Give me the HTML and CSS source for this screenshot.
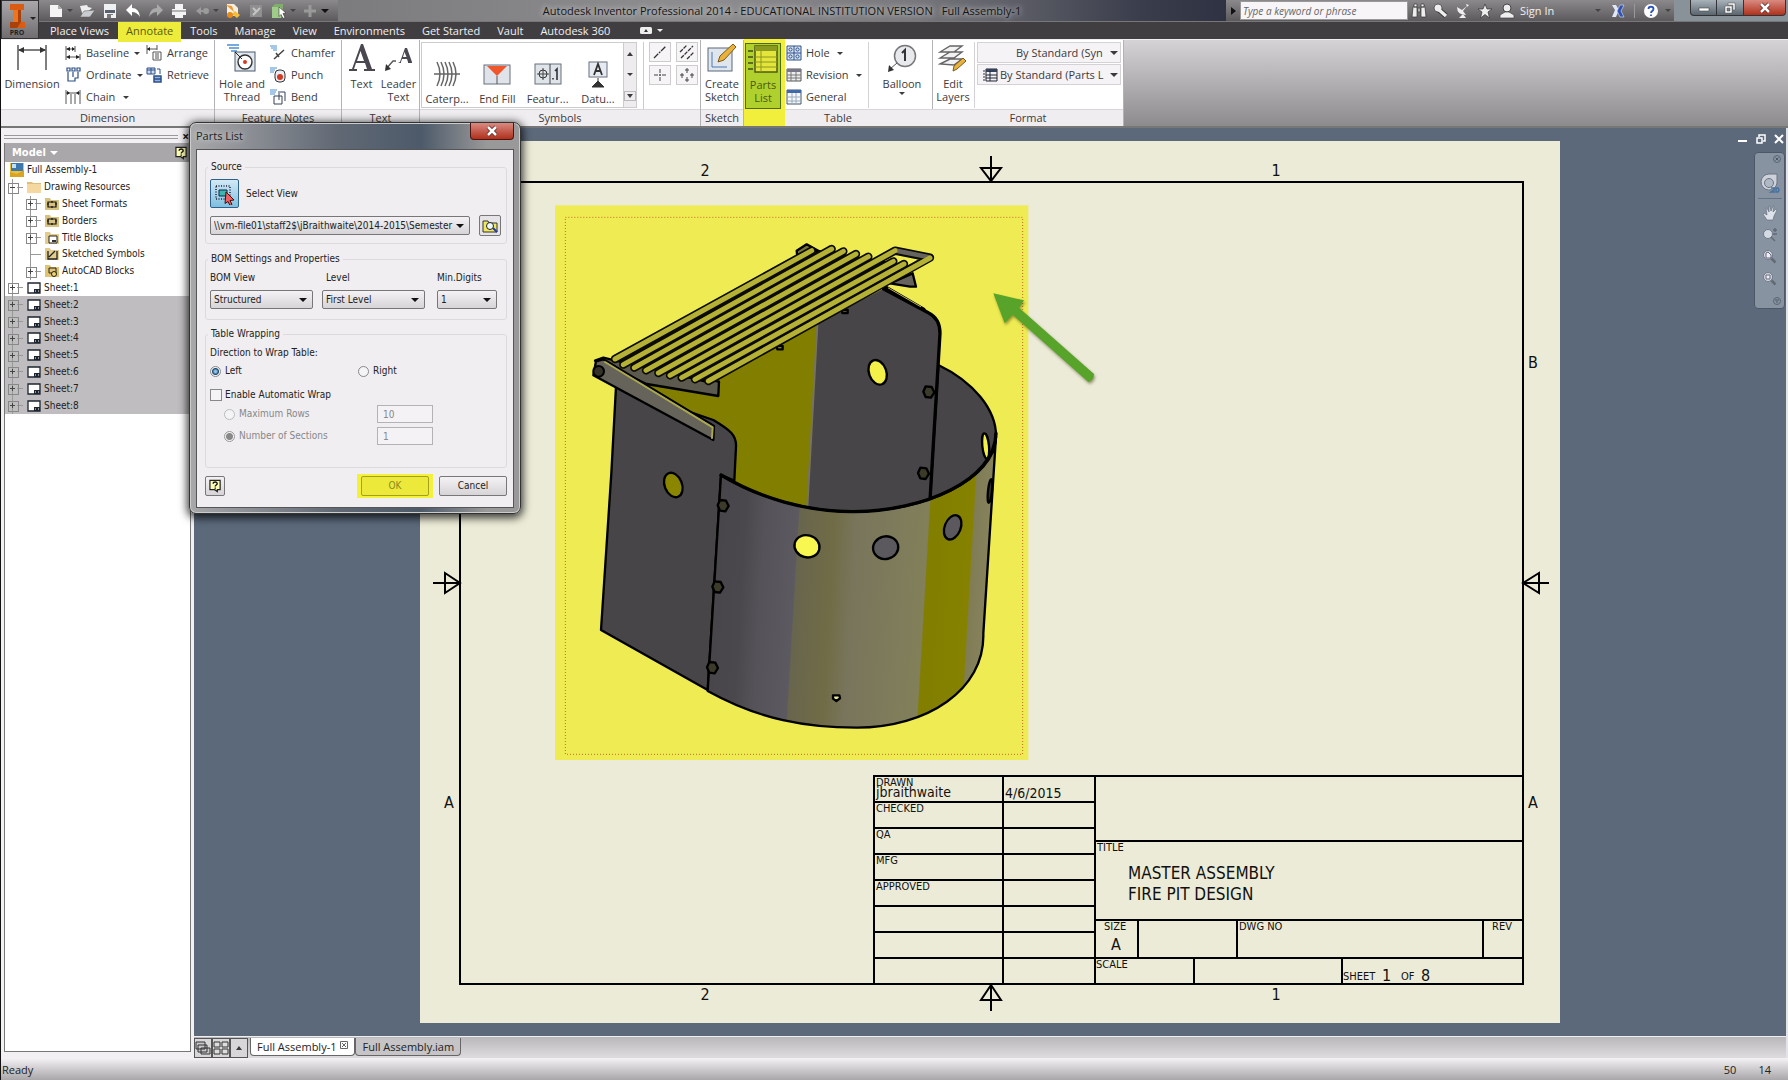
FILE: index.html
```html
<!DOCTYPE html>
<html lang="en">
<head>
<meta charset="utf-8">
<title>Autodesk Inventor Professional 2014 - Full Assembly-1</title>
<link rel="stylesheet" href="styles.css">
</head>
<body>
<svg class="defs" width="0" height="0" aria-hidden="true">
  <symbol id="i-folder" viewBox="0 0 14 14"><path d="M0 2h5l1 1h8v10H0z" fill="#dcbf7c"/><path d="M0 4h14v9H0z" fill="#f4d8a0"/></symbol>
  <symbol id="i-folder-fmt" viewBox="0 0 14 14"><path d="M0 1h5l1 2h8v10H0z" fill="#d8c280"/><path d="M3 5h8v5H3zM2 7h2M10 7h2M7 4v2M7 9v2" fill="none" stroke="#111" stroke-width="1.2"/></symbol>
  <symbol id="i-folder-ttl" viewBox="0 0 14 14"><path d="M0 1h5l1 2h8v10H0z" fill="#e2cd8f"/><path d="M4 5h8v7H4z" fill="#fff" stroke="#222"/><path d="M7 9h4v2H7z" fill="#333"/></symbol>
  <symbol id="i-folder-sym" viewBox="0 0 14 14"><path d="M0 1h5l1 2h8v10H0z" fill="#e2cd8f"/><path d="M3 4v8h9V4M4 10l6-6" fill="none" stroke="#222" stroke-width="1.3"/></symbol>
  <symbol id="i-folder-cad" viewBox="0 0 14 14"><path d="M0 1h5l1 2h8v10H0z" fill="#e0c472"/><path d="M4 4h7v5H4z" fill="none" stroke="#222"/><circle cx="9" cy="10" r="2.5" fill="#f2d66a" stroke="#222"/></symbol>
  <symbol id="i-sheet" viewBox="0 0 14 12"><path d="M1 1h12v10H1z" fill="#fff" stroke="#1c2430" stroke-width="1.3"/><path d="M7 7h6v4H7z" fill="#1c2430"/><path d="M8 9h1M11 9h1" stroke="#fff"/></symbol>
  <symbol id="i-help" viewBox="0 0 14 14"><path d="M1 1h11v10H9v2l-3-2H1z" fill="#ffffb4" stroke="#222" stroke-width="1.3"/><path d="M4.500 4.500C4.500 2 9 2 8.800 4.600 8.700 6 6.700 6 6.700 7.600M6.700 8.700v1.300" fill="none" stroke="#111" stroke-width="1.5"/></symbol>
  <symbol id="i-magnify" viewBox="0 0 16 16"><circle cx="6" cy="6" r="4.500" fill="#d4dae2" stroke="#70798a"/><path d="M9.500 9.500l4 4" stroke="#626a74" stroke-width="2.500"/></symbol>
</svg>

<div class="app">
<header class="top">
  <button class="app-btn" aria-label="Application menu">
    <svg width="17" height="25" viewBox="0 0 17 25"><path d="M1 0h14v6h-3v12h4v6H1v-6h3V6H1z" fill="#d95c12"/><path d="M12 6v12l-4 6H1v-6h3V6z" fill="#a8420a"/><path d="M4 6h5v12H4z" fill="#ee7420"/></svg>
    <span class="tri app-tri"></span><b>PRO</b>
  </button>
  <div class="titlebar">
    <div class="qat">
      <button aria-label="New"><svg width="16" height="16" viewBox="0 0 16 16"><path d="M2 2h8l4 4v8H2z" fill="#f4f4f4"/><path d="M10 2v4h4z" fill="#aaa"/></svg></button><i class="tri dim"></i>
      <button aria-label="Open"><svg width="16" height="16" viewBox="0 0 16 16"><path d="M1 3l7-1 1 2 4 1-9 8z" fill="#eee"/><path d="M1 14L5 8l11-1-5 7z" fill="#c9ccd0" stroke="#555" stroke-width=".5"/></svg></button>
      <button aria-label="Save"><svg width="16" height="16" viewBox="0 0 16 16"><path d="M2 1h12v14H2z" fill="#eef0f3"/><path d="M3 7h10v3H3z" fill="#59616e"/><path d="M5 11h6v4H5z" fill="#777"/><path d="M9 12h2v3H9z" fill="#eee"/></svg></button>
      <button aria-label="Undo"><svg width="16" height="16" viewBox="0 0 16 16"><path d="M7 1v4q7 0 8 9-3-5-8-5v4L1 7z" fill="#fff"/></svg></button>
      <button aria-label="Redo"><svg width="16" height="16" viewBox="0 0 16 16"><path d="M9 1v4q-7 0-8 9 3-5 8-5v4l6-6z" fill="#aaa"/></svg></button>
      <button aria-label="Print"><svg width="16" height="16" viewBox="0 0 16 16"><path d="M4 1h8v5H4zM1 6h14v6H1zM4 11h8v4H4z" fill="#f4f4f4"/><path d="M1 8h14" stroke="#777"/></svg></button>
      <button aria-label="Return"><svg width="16" height="16" viewBox="0 0 16 16"><path d="M7 4v3h2v2H7v3L2 8z" fill="#9b9b9b"/><circle cx="12" cy="8" r="3" fill="#9b9b9b"/></svg></button><i class="tri dim"></i>
      <button aria-label="Update"><svg width="16" height="16" viewBox="0 0 16 16"><path d="M2 1h7l4 4v8H2z" fill="#f3eee0"/><path d="M1 2l6 1 2 6z" fill="#f09a28"/><path d="M10 8l5 4-3 3-5-4z" fill="#f6bd3c"/><circle cx="5" cy="12" r="3" fill="#e78a18"/></svg></button>
      <button aria-label="Select priority"><svg width="16" height="16" viewBox="0 0 16 16"><path d="M2 2h12v12H2z" fill="#8f8f8f"/><path d="M5 12l7-7M5 5l3 3" stroke="#c4c4c4" stroke-width="2"/></svg></button>
      <button aria-label="Select"><svg width="16" height="16" viewBox="0 0 16 16"><path d="M1 4l3-3h8v11l-2 3H1z" fill="#7fae6d"/><path d="M1 4h9v11H1z" fill="#9fcc8b"/><path d="M8 4l7 6-3 .5 2 4-2 1-2-4-2 2z" fill="#fff" stroke="#333" stroke-width=".6"/></svg></button><i class="tri dim"></i>
      <button aria-label="Add"><svg width="16" height="16" viewBox="0 0 16 16"><path d="M8 2v12M2 8h12" stroke="#999" stroke-width="3"/></svg></button><i class="tri dark"></i>
    </div>
    <div class="wtitle"><span>Autodesk Inventor Professional 2014 - EDUCATIONAL INSTITUTION VERSION</span><span>Full Assembly-1</span></div>
    <div class="search">
      <i class="play"></i>
      <input type="text" placeholder="Type a keyword or phrase" aria-label="Search">
      <button aria-label="Find"><svg width="16" height="16" viewBox="0 0 16 16"><path d="M3 1h3v3H3zM10 1h3v3h-3zM2 4h4v10H1zM10 4h4l1 10h-5zM7 5h2v4H7z" fill="#eee" stroke="#333" stroke-width=".7"/></svg></button>
      <button aria-label="Key"><svg width="16" height="16" viewBox="0 0 16 16"><path d="M5 6l8 7" stroke="#333" stroke-width="5"/><circle cx="5" cy="5" r="4" fill="#eee" stroke="#333" stroke-width=".7"/><path d="M5 6l8 7" stroke="#eee" stroke-width="3.500"/></svg></button>
      <button aria-label="Communication center"><svg width="16" height="16" viewBox="0 0 16 16"><path d="M2 4q0 8 9 8L8 8l4-5-5 4zM4 15l4-4 3 4zM11 1l3 1-2 2z" fill="#eee"/></svg></button>
      <button aria-label="Favorites"><svg width="16" height="16" viewBox="0 0 16 16"><path d="M8 1l2 5h5l-4 3 1.500 6L8 11.500 3.500 15 5 9 1 6h5z" fill="#eee" stroke="#333" stroke-width=".7"/></svg></button>
      <button class="signin"><svg width="16" height="16" viewBox="0 0 16 16"><circle cx="8" cy="5" r="4" fill="#eee" stroke="#444"/><path d="M1 15v-3l5-3h4l5 3v3z" fill="#eee" stroke="#444" stroke-width=".7"/></svg>Sign In</button>
      <i class="tri dim"></i>
      <button aria-label="Exchange"><svg width="16" height="16" viewBox="0 0 16 16"><path d="M2 2h4l3 5-3 7H2l3-7z" fill="#dfe6f5"/><path d="M14 2h-4L7 8l3 6h4l-3-6z" fill="#3150b4" stroke="#dfe6f5" stroke-width=".6"/></svg></button>
      <i class="vline"></i>
      <button aria-label="Help"><svg width="16" height="16" viewBox="0 0 16 16"><circle cx="8" cy="8" r="7" fill="#fff"/><path d="M5.500 6C5.500 3 10.500 3 10.500 6 10.500 8 8 8 8 10M8 11.500V13" fill="none" stroke="#2b53c0" stroke-width="1.800"/></svg></button>
      <i class="tri dim"></i>
    </div>
    <div class="winbtns">
      <button aria-label="Minimize"><svg width="12" height="12" viewBox="0 0 12 12"><path d="M1 6h10v3H1z" fill="#fff" stroke="#444" stroke-width=".6"/></svg></button>
      <button aria-label="Restore"><svg width="12" height="12" viewBox="0 0 12 12"><path d="M4 1h7v7H9V3H4zM1 4h7v7H1zM3 6v3h3V6z" fill="#fff" fill-rule="evenodd" stroke="#444" stroke-width=".5"/></svg></button>
      <button class="x" aria-label="Close"><svg width="12" height="12" viewBox="0 0 12 12"><path d="M2 2l8 8M10 2l-8 8" stroke="#5a2020" stroke-width="4"/><path d="M2 2l8 8M10 2l-8 8" stroke="#fff" stroke-width="2.500"/></svg></button>
    </div>
  </div>
  <nav class="tabs">
    <button>Place Views</button><button class="on">Annotate</button><button>Tools</button><button>Manage</button><button>View</button><button>Environments</button><button>Get Started</button><button>Vault</button><button>Autodesk 360</button>
    <span class="mini"><svg width="12" height="7" viewBox="0 0 12 7"><rect width="12" height="7" rx="1.500" fill="#eee"/><path d="M4 5l2-3 2 3z" fill="#333"/></svg><i class="tri"></i></span>
  </nav>
</header>

<section class="ribbon">
  <div class="panel p-dim">
    <div class="pbody">
      <button class="big w60"><svg width="30" height="28" viewBox="0 0 30 28"><path d="M1 1v25M29 1v25M2 6h26" stroke="#555" stroke-width="1.500" fill="none"/><path d="M1 6l6-3v6zM29 6l-6-3v6z" fill="#333"/></svg>Dimension</button>
      <div class="stack w84">
        <button><svg width="16" height="16" viewBox="0 0 16 16"><path d="M1 1v14M15 9v6M10 1v6M2 4h7M2 12h12" stroke="#555" fill="none"/><path d="M1 4l4-2v4zM10 4L7 2v4zM1 12l4-2v4zM15 12l-4-2v4z" fill="#222"/></svg>Baseline<i class="tri push"></i></button>
        <button><svg width="16" height="16" viewBox="0 0 16 16"><path d="M2 1h3v3H2zM7 1h3v3H7zM12 1h3v3h-3zM3 5v9h7v-3h3V5M8 5v5" fill="none" stroke="#2c4f88" stroke-width="1.200"/></svg>Ordinate<i class="tri push"></i></button>
        <button><svg width="16" height="16" viewBox="0 0 16 16"><path d="M1 1v14M6 5v10M10 5v10M15 1v14M1 4h14" stroke="#555" fill="none"/><path d="M5 4L2 2v4zM11 4l3-2v4z" fill="#222"/></svg>Chain<i class="tri push2"></i></button>
      </div>
      <div class="stack">
        <button><svg width="16" height="16" viewBox="0 0 16 16"><path d="M1 0v9M11 0v5M1 4h10M7 7h8v8H7zM9 9h4M9 11h4M9 13h4" stroke="#555" fill="none"/><path d="M1 4l3-2v4z" fill="#222"/></svg>Arrange</button>
        <button><svg width="16" height="16" viewBox="0 0 16 16"><path d="M1 1h8v6H1zM1 3h8M5 1v6" stroke="#2c4f88" fill="#cfdcf0"/><path d="M8 9h7v6H8zM8 12h7" stroke="#2c4f88" stroke-width="1.500" fill="#8fb2e0"/><path d="M11 2h3v5" stroke="#2c4f88" fill="none"/></svg>Retrieve</button>
      </div>
    </div>
    <h2>Dimension</h2>
  </div>
  <div class="panel p-feat">
    <div class="pbody">
      <button class="big w54"><svg width="30" height="28" viewBox="0 0 30 28"><path d="M0 1h12M2 4h10M4 7h6" stroke="#4a8fd0" stroke-width="1.500"/><rect x="8" y="8" width="20" height="19" fill="#e2e8f0" stroke="#4c5a6c"/><circle cx="18" cy="18" r="7" fill="#fff" stroke="#333" stroke-width="1.400"/><circle cx="18" cy="18" r="2" fill="#d33a22"/><path d="M8 8l7 7" stroke="#222"/></svg>Hole and<br>Thread</button>
      <div class="stack">
        <button><svg width="16" height="16" viewBox="0 0 16 16"><path d="M0 1h7M1 3h6M3 5h4" stroke="#4a8fd0"/><path d="M4 14l10-9M6 8l3 4" stroke="#444" stroke-width="1.500"/></svg>Chamfer</button>
        <button><svg width="16" height="16" viewBox="0 0 16 16"><path d="M0 1h7M0 3h5M0 5h4" stroke="#4a8fd0"/><rect x="5" y="3" width="10" height="12" rx="4" fill="#e8eef4" stroke="#333"/><circle cx="10" cy="10" r="3" fill="#d33a22"/></svg>Punch</button>
        <button><svg width="16" height="16" viewBox="0 0 16 16"><path d="M0 1h7M0 3h6M0 5h5" stroke="#4a8fd0"/><path d="M4 7v8h8V7zM8 3h7v9M9 4v7" fill="none" stroke="#34435a"/></svg>Bend</button>
      </div>
    </div>
    <h2>Feature Notes</h2>
  </div>
  <div class="panel p-text">
    <div class="pbody">
      <button class="big w36"><svg width="30" height="28" viewBox="0 0 30 28"><path d="M2 27h8v-2H7l2-6h9l2 6h-3v2h11v-2h-3L16 0h-2L5 25H2zM10 17l3.500-10L17 17z" fill="#4b4750" fill-rule="evenodd"/></svg>Text</button>
      <button class="big w36"><svg width="30" height="28" viewBox="0 0 30 28"><path d="M14 19h3v-1l1-3h5l1 3v1h4v-1l-5-14h-2l-5 14zM19 13l1.500-5 2 5z" fill="#4b4750" fill-rule="evenodd"/><path d="M12 17H9l-7 8" stroke="#555" fill="none" stroke-width="1.300"/><path d="M1 27l1-7 5 5z" fill="#333"/></svg>Leader<br>Text</button>
    </div>
    <h2>Text</h2>
  </div>
  <div class="panel p-sym">
    <div class="pbody">
      <div class="gallery">
        <button><svg width="28" height="28" viewBox="0 0 28 28"><path d="M1 14h26M4 2q6 12 0 24M8 2q6 12 0 24M12 2q6 12 0 24M16 2q6 12 0 24M20 2q6 12 0 24" stroke="#666" stroke-width="1.500" fill="none"/></svg>Caterp...</button>
        <button><svg width="28" height="28" viewBox="0 0 28 28"><rect x="1" y="5" width="26" height="19" fill="#dfe3ea" stroke="#68707c"/><path d="M4 6h20L14 16z" fill="#f0562c"/><path d="M14 16v8" stroke="#555"/></svg>End Fill</button>
        <button><svg width="28" height="28" viewBox="0 0 28 28"><rect x="1" y="4" width="26" height="20" fill="#dfe3ea" stroke="#68707c"/><path d="M16 4v20M3 14h12M9 8v12" stroke="#444"/><circle cx="9" cy="14" r="4" fill="none" stroke="#333"/><path d="M19 18v1.500M21 11l2-2v11" stroke="#333" stroke-width="1.600" fill="none"/></svg>Featur...</button>
        <button><svg width="28" height="28" viewBox="0 0 28 28"><rect x="5" y="2" width="18" height="15" fill="#e6ebf2" stroke="#68707c"/><path d="M10 15l4-11 4 11M11 11h6" stroke="#333" stroke-width="1.800" fill="none"/><path d="M14 18v4M8 27h12l-6-6z" fill="#333" stroke="#333"/></svg>Datu...</button>
        <div class="gscroll"><i class="tri up"></i><i class="tri"></i><i class="tri bar"></i></div>
      </div>
      <div class="mini-grid">
        <button aria-label="Centerline"><svg width="16" height="16" viewBox="0 0 16 16"><path d="M2 14L14 2" stroke="#333" stroke-width="1.300" stroke-dasharray="6 1 2 1"/></svg></button>
        <button aria-label="Bisector"><svg width="16" height="16" viewBox="0 0 16 16"><path d="M1 8l7-7M2 14L14 2M8 15l7-7" stroke="#333" stroke-width="1.300" stroke-dasharray="4 1"/></svg></button>
        <button aria-label="Center mark"><svg width="16" height="16" viewBox="0 0 16 16"><path d="M8 2v4M8 7v2M8 10v4M2 8h4M7 8h2M10 8h4" stroke="#444"/></svg></button>
        <button aria-label="Centered pattern"><svg width="16" height="16" viewBox="0 0 16 16"><path d="M8 1v5M6 3h4M8 10v5M6 13h4M3 6v5M1 8h4M13 6v5M11 8h4" stroke="#444"/></svg></button>
      </div>
    </div>
    <h2>Symbols</h2>
  </div>
  <div class="panel p-sk">
    <div class="pbody">
      <button class="big w42"><svg width="30" height="28" viewBox="0 0 30 28"><rect x="1" y="4" width="24" height="23" fill="#dfe6ee" stroke="#5a6878"/><path d="M5 8v15h15" stroke="#4a78b0" fill="none"/><path d="M11 18l2-6L26 0l3 3-12 13z" fill="#e9b23c" stroke="#7a5a1c"/></svg>Create<br>Sketch</button>
    </div>
    <h2>Sketch</h2>
  </div>
  <div class="panel p-table">
    <div class="parts">
      <button class="big parts-btn"><svg width="30" height="28" viewBox="0 0 30 28"><path d="M0 6h5M0 12h5M0 18h5M0 24h5" stroke="#444c10" stroke-width="1.500"/><rect x="7" y="1" width="22" height="26" fill="#e4e53a" stroke="#4f5a18" stroke-width="1.500"/><path d="M7 12h22M7 17h22M7 22h22M13 1v26" stroke="#8c9620"/><path d="M7 1h22v5H7z" fill="#8a9a20"/></svg>Parts<br>List</button>
    </div>
    <div class="prest">
    <div class="pbody">
      <div class="stack w84b">
        <button><svg width="16" height="16" viewBox="0 0 16 16"><path d="M1 1h14v14H1zM8 1v14M1 8h14" fill="#dbe6f4" stroke="#2c4f88"/><circle cx="4.500" cy="4.500" r="1.600" fill="none" stroke="#2c4f88"/><circle cx="11.500" cy="4.500" r="1.600" fill="none" stroke="#2c4f88"/><circle cx="4.500" cy="11.500" r="1.600" fill="none" stroke="#2c4f88"/><circle cx="11.500" cy="11.500" r="1.600" fill="none" stroke="#2c4f88"/></svg>Hole<i class="tri push2"></i></button>
        <button><svg width="16" height="16" viewBox="0 0 16 16"><path d="M1 2h14v12H1z" fill="#eee" stroke="#555"/><path d="M1 2h14v3H1z" fill="#778"/><path d="M1 8h14M1 11h14M5 5v9M10 5v9" stroke="#777"/></svg>Revision<i class="tri push2"></i></button>
        <button><svg width="16" height="16" viewBox="0 0 16 16"><path d="M1 1h14v14H1z" fill="#f4f7fb" stroke="#456"/><path d="M1 1h14v3H1z" fill="#3f69a8"/><path d="M1 8h14M1 12h14M6 4v11M10 4v11" stroke="#9ab"/></svg>General</button>
      </div>
      <i class="pdiv"></i>
      <button class="big w66"><svg width="30" height="28" viewBox="0 0 30 28"><circle cx="18" cy="12" r="10.500" fill="#e7e9ed" stroke="#777" stroke-width="1.500"/><path d="M15 9l3-3v11" fill="none" stroke="#333" stroke-width="2"/><path d="M10 19l-7 6" stroke="#555"/><path d="M1 28l1-7 5 5z" fill="#333"/></svg>Balloon<i class="tri below"></i></button>
    </div>
    <h2 class="shift">Table</h2>
    </div>
  </div>
  <div class="panel p-fmt">
    <div class="pbody">
      <button class="big w40"><svg width="30" height="28" viewBox="0 0 30 28"><path d="M2 20l10-5h12l-8 6zM2 14l10-6h12l-8 6zM2 8l10-6h12l-8 6z" fill="#f1f2f4" stroke="#666" stroke-width="1.400"/><path d="M15 27l1-5 9-8 3 3-9 8z" fill="#e9b23c" stroke="#7a5a1c"/></svg>Edit<br>Layers</button>
      <i class="pdiv"></i>
      <div class="fmts">
        <div class="fmt"><select aria-label="Layer style"><option>By Standard (Syn</option></select><i class="tri"></i></div>
        <div class="fmt two"><svg width="16" height="16" viewBox="0 0 16 16"><path d="M1 4h2M1 7h2M1 10h2M1 13h2" stroke="#333"/><path d="M4 2h11v12H4z" fill="#f0f4f8" stroke="#223"/><path d="M4 2h11v3H4z" fill="#34435a"/><path d="M4 8h11M4 11h11M8 4v10" stroke="#223"/></svg><select aria-label="Object style"><option>By Standard (Parts L</option></select><i class="tri"></i></div>
      </div>
    </div>
    <h2>Format</h2>
  </div>
</section>

<div class="work">
  <aside class="side">
    <div class="grip"><i></i><span aria-hidden="true">×</span></div>
    <div class="model"><div class="mhead"><b>Model</b><i class="tri"></i><svg width="13" height="14"><use href="#i-help"/></svg></div>
    <ul class="tree">
      <li class="l0"><svg width="14" height="14" viewBox="0 0 14 14"><path d="M0 0h14v14H0z" fill="#e9c23c"/><path d="M1 0h12v8H1z" fill="#3c78ae"/><path d="M0 9l7 2 7-4v7H0z" fill="#d9a422"/><path d="M2 1h4v4H2z" fill="#bfe0f5"/></svg>Full Assembly-1</li>
      <li class="l1"><i class="ex minus"></i><svg width="14" height="14"><use href="#i-folder"/></svg>Drawing Resources</li>
      <li class="l2"><i class="ex"></i><svg width="14" height="14"><use href="#i-folder-fmt"/></svg>Sheet Formats</li>
      <li class="l2"><i class="ex"></i><svg width="14" height="14"><use href="#i-folder-fmt"/></svg>Borders</li>
      <li class="l2"><i class="ex"></i><svg width="14" height="14"><use href="#i-folder-ttl"/></svg>Title Blocks</li>
      <li class="l2"><i class="ex none"></i><svg width="14" height="14"><use href="#i-folder-sym"/></svg>Sketched Symbols</li>
      <li class="l2"><i class="ex"></i><svg width="14" height="14"><use href="#i-folder-cad"/></svg>AutoCAD Blocks</li>
      <li class="l1"><i class="ex"></i><svg width="14" height="12"><use href="#i-sheet"/></svg>Sheet:1</li>
      <li class="l1 sel"><i class="ex"></i><svg width="14" height="12"><use href="#i-sheet"/></svg>Sheet:2</li>
      <li class="l1 sel"><i class="ex"></i><svg width="14" height="12"><use href="#i-sheet"/></svg>Sheet:3</li>
      <li class="l1 sel"><i class="ex"></i><svg width="14" height="12"><use href="#i-sheet"/></svg>Sheet:4</li>
      <li class="l1 sel"><i class="ex"></i><svg width="14" height="12"><use href="#i-sheet"/></svg>Sheet:5</li>
      <li class="l1 sel"><i class="ex"></i><svg width="14" height="12"><use href="#i-sheet"/></svg>Sheet:6</li>
      <li class="l1 sel"><i class="ex"></i><svg width="14" height="12"><use href="#i-sheet"/></svg>Sheet:7</li>
      <li class="l1 sel"><i class="ex"></i><svg width="14" height="12"><use href="#i-sheet"/></svg>Sheet:8</li>
    </ul></div>
  </aside>
  <main class="doc">
    <div class="canvas">
      <svg class="sheet" viewBox="420 141 1140 882" role="img" aria-label="Drawing sheet">
        <defs>
          <linearGradient id="cyl" gradientUnits="userSpaceOnUse" x1="520" y1="1200" x2="1350" y2="1249">
            <stop offset="0" stop-color="#48464a"/><stop offset=".1" stop-color="#4a484c"/><stop offset=".17" stop-color="#555359"/><stop offset=".29" stop-color="#5c5a60"/>
            <stop offset=".295" stop-color="#68654e"/><stop offset=".42" stop-color="#706c46"/><stop offset=".5" stop-color="#78755c"/><stop offset=".76" stop-color="#82805a"/>
            <stop offset=".765" stop-color="#817e00"/><stop offset=".92" stop-color="#868200"/><stop offset=".925" stop-color="#807d56"/><stop offset="1" stop-color="#88855e"/>
          </linearGradient>
        </defs>
        <rect x="420" y="141" width="1140" height="882" fill="#ecebd7"/>
        <g fill="none" stroke="#000" stroke-width="2">
          <path d="M460 182H1523V984H460z"/>
          <path d="M991 156V181M981 168h20l-10 13zM991 1011V985M981 1000h20l-10-15zM433 583h27M445 573v20l15-10zM1549 583h-26M1539 573v20l-16-10z"/>
          <path d="M874 984V776H1523M1003 776V984M1095 776V984M874 802H1095M874 828H1095M874 854H1095M874 880H1095M874 906H1095M874 932H1095M874 958H1523M1095 841H1523M1095 920H1523M1138 920v38M1237 920v38M1483 920v38M1194 958v26M1342 958v26"/>
        </g>
        <g class="zone" text-anchor="middle">
          <text x="705" y="176">2</text><text x="1276" y="176">1</text><text x="705" y="1000">2</text><text x="1276" y="1000">1</text>
          <text x="449" y="368">B</text><text x="1533" y="368">B</text><text x="449" y="808">A</text><text x="1533" y="808">A</text>
          <text x="1116" y="950">A</text>
        </g>
        <g class="lbl">
          <text x="876" y="786">DRAWN</text><text x="876" y="812">CHECKED</text><text x="876" y="838">QA</text><text x="876" y="864">MFG</text><text x="876" y="890">APPROVED</text>
          <text x="1097" y="851">TITLE</text><text x="1104" y="930">SIZE</text><text x="1239" y="930">DWG NO</text><text x="1492" y="930">REV</text><text x="1096" y="968">SCALE</text>
          <text x="1343" y="980">SHEET</text><text x="1401" y="980">OF</text>
        </g>
        <g class="val"><text x="876" y="797">jbraithwaite</text><text x="1005" y="798">4/6/2015</text></g>
        <g class="ttl"><text x="1128" y="879">MASTER ASSEMBLY</text><text x="1128" y="900">FIRE PIT DESIGN</text></g>
        <g class="zone"><text x="1382" y="981">1</text><text x="1421" y="981">8</text></g>

        <g transform="translate(540 190) scale(.33333)" stroke-linejoin="round" stroke-linecap="round">
          <rect x="45" y="46" width="1420" height="1664" fill="#efec53"/>
          <rect x="76" y="82" width="1372" height="1611" fill="none" stroke="#c8642a" stroke-width="3" stroke-dasharray="3 6" stroke-linecap="butt"/>
          <g stroke="#000" stroke-width="7">
            <path d="M1195 525C1300 575 1370 660 1368 740C1366 820 1280 895 1170 928z" fill="#484549"/>
            <ellipse cx="1337" cy="768" rx="10" ry="38" fill="#f4f04a" transform="rotate(-6 1337 768)"/>
            <path d="M250 550L530 560L832 400L800 955C720 940 640 905 583 875L500 700z" fill="#817e00" stroke="none"/>
            <path d="M832 400L1030 296L1165 368C1190 380 1200 400 1200 430L1170 930C1050 965 900 975 800 950z" fill="#484549" stroke="none"/>
            <path d="M832 405L802 950" stroke="#77745e" stroke-width="6"/>
            <path d="M1030 296L1165 368C1190 380 1200 400 1200 430L1170 930" fill="none" stroke-width="10"/>
            <path d="M1035 290L1152 358" stroke-width="10"/><path d="M1045 294L1142 350" stroke="#b7b36a" stroke-width="3"/>
            <ellipse cx="1013" cy="547" rx="26" ry="38" transform="rotate(-20 1013 547)" fill="#f4f04a"/>
            <path d="M228 590L520 690C570 720 590 735 588 770L583 872L543 855L503 1500L183 1320L214 850z" fill="#484549"/>
            <ellipse cx="400" cy="885" rx="26" ry="38" transform="rotate(-22 400 885)" fill="#8a8600"/>
            <path d="M543 855C660 925 800 965 940 965C1150 965 1366 870 1368 740L1330 1330C1335 1500 1160 1613 950 1613C800 1613 660 1590 503 1503z" fill="url(#cyl)"/>
            <path d="M543 855C660 925 800 965 940 965C1150 965 1366 870 1368 730" fill="none" stroke-width="10"/>
            <ellipse cx="801" cy="1069" rx="38" ry="33" fill="#f8f650" transform="rotate(15 801 1069)"/>
            <ellipse cx="1037" cy="1073" rx="38" ry="34" fill="#5c595e" transform="rotate(-12 1037 1073)"/>
            <ellipse cx="1238" cy="1012" rx="24" ry="38" fill="#5c595e" transform="rotate(22 1238 1012)"/>
            <ellipse cx="1350" cy="903" rx="6" ry="36" fill="#333" transform="rotate(6 1350 903)"/>
            <path d="M879 1516h19l2 9-11 8-10-7z" fill="#e8e59a"/>
            <g fill="#3c3a28"><path d="M540 930l18 2 8 16-10 16-16-2-7-16z"/><path d="M524 1174l18 2 8 16-10 16-16-2-7-16z"/><path d="M508 1416l18 2 8 16-10 16-16-2-7-16z"/><path d="M1157 589l18 2 8 16-10 16-16-2-7-16z"/><path d="M1141 833l18 2 8 16-10 16-16-2-7-16z"/></g>
            <path d="M1050 280L1118 250L1128 290L1110 290z" fill="#66635f"/>
            <path d="M770 182L800 163L840 185L830 200H772z" fill="#77743c"/>
            <path d="M710 468h18v10h-16zM905 360h18v9h-16z" fill="#aaa73a"/>
            <path d="M165 512L190 503L240 515L537 575L535 618L320 582L240 545z" fill="#5c594e"/>
            <path d="M225 508L815 180L1065 222L510 578z" fill="#111"/>
          </g>
          <g fill="none">
            <g stroke="#0a0a00" stroke-width="25"><path d="M225 507L815 182M250 524L875 177M283 533L910 184M318 541L948 192M355 549L985 200M425 563L1060 214M465 568L1092 222"/></g>
            <g stroke="#b4b134" stroke-width="15"><path d="M225 507L815 182M250 524L875 177M283 533L910 184M318 541L948 192M355 549L985 200M425 563L1060 214M465 568L1092 222"/></g>
            <path d="M390 556L1065 182L1170 203L505 573" stroke="#0a0a00" stroke-width="25"/>
            <path d="M1070 182L1168 202" stroke="#66635f" stroke-width="14"/>
            <path d="M390 556L1065 182M1170 204L505 573" stroke="#b4b134" stroke-width="15"/>
          </g>
          <path d="M168 514L190 508L522 708L520 750L160 556z" fill="#66635a" stroke="#000" stroke-width="7"/>
          <path d="M195 516L518 712L516 744" fill="none" stroke="#aba94c" stroke-width="6"/>
          <circle cx="176" cy="544" r="16" fill="#333128" stroke="#000" stroke-width="6"/>
          <path class="arrow" d="M1360 310L1452 331L1437 353L1662 552Q1662 572 1645 576L1418 374L1394 400z" fill="#58a329"/>
        </g>
      </svg>
      <div class="docbtns">
        <button aria-label="Minimize drawing"><svg width="10" height="10" viewBox="0 0 10 10"><path d="M0 7h9" stroke="#fff" stroke-width="2"/></svg></button>
        <button aria-label="Restore drawing"><svg width="10" height="10" viewBox="0 0 10 10"><path d="M3 3V1h6v6H7M1 4h5v5H1z" fill="none" stroke="#fff" stroke-width="1.500"/></svg></button>
        <button aria-label="Close drawing"><svg width="10" height="10" viewBox="0 0 10 10"><path d="M1 1l8 8M9 1L1 9" stroke="#fff" stroke-width="2"/></svg></button>
      </div>
      <div class="navbar">
        <svg class="end" width="8" height="8" viewBox="0 0 8 8"><circle cx="4" cy="4" r="3.500" fill="none" stroke="#5a6675"/><path d="M2.500 2.500l3 3M5.500 2.500l-3 3" stroke="#4a5665"/></svg>
        <button class="wheel" aria-label="Steering wheel"><svg width="24" height="24" viewBox="0 0 24 24"><path d="M11 2h8v9a8 8 0 1 1-8-9z" fill="#ccd1da" stroke="#6b7584"/><circle cx="11" cy="11" r="4.500" fill="#b0b8c4" stroke="#6b7584"/><path d="M13 16h3v2l-3 2h4M18 16h2q2 2 0 4h-2z" stroke="#4672a0" stroke-width="1.500" fill="none"/></svg></button>
        <button aria-label="Pan"><svg width="16" height="16" viewBox="0 0 16 16"><path d="M5 15L1 9l1-1 3 2-1-7h1l2 4V1h1l1 5 2-5h1l-1 6 3-3 1 1-3 6-1 4z" fill="#dde2ea" stroke="#667080" stroke-width=".7"/></svg></button>
        <button aria-label="Zoom"><svg width="16" height="16" viewBox="0 0 16 16"><circle cx="6" cy="7" r="4.500" fill="#d4dae2" stroke="#70798a"/><path d="M9 10l4 4M11 3h4M13 1v4M11 7h4" stroke="#626a74" stroke-width="1.500"/></svg></button>
        <button aria-label="Zoom all"><svg width="16" height="16"><use href="#i-magnify"/><path d="M4 9V4l2-1 3 3v3z" fill="#eef" stroke="#667"/></svg></button>
        <button aria-label="Zoom window"><svg width="16" height="16"><use href="#i-magnify"/><path d="M4 4h4v4H4z" fill="#eef" stroke="#667"/></svg></button>
        <svg class="end last" width="8" height="8" viewBox="0 0 8 8"><circle cx="4" cy="4" r="3.500" fill="none" stroke="#5a6675"/><path d="M2 3h4M3 5h2" stroke="#4a5665"/></svg>
      </div>
    </div>
    <div class="doctabs">
      <button class="sq" aria-label="Cascade"><svg width="16" height="14" viewBox="0 0 16 14"><path d="M1 1h9v7H1zM3 4h9v7H3zM6 7h9v6H6z" fill="#c8c8cc" stroke="#333"/></svg></button>
      <button class="sq" aria-label="Tile"><svg width="16" height="14" viewBox="0 0 16 14"><path d="M1 1h6v5H1zM9 1h6v5H9zM1 8h6v5H1zM9 8h6v5H9z" fill="#ddd" stroke="#333"/></svg></button>
      <button class="sq" aria-label="Show tabs"><i class="tri up"></i></button>
      <button class="dt on">Full Assembly-1<svg width="8" height="8" viewBox="0 0 8 8"><path d="M.5.5h7v7h-7zM2 2l4 4M6 2L2 6" fill="none" stroke="#666"/></svg></button>
      <button class="dt">Full Assembly.iam</button>
    </div>
  </main>
</div>
<footer class="status"><span>Ready</span><span class="n">50</span><span>14</span></footer>

<form class="dialog" role="dialog" aria-labelledby="dlg-title" onsubmit="return false">
  <div class="dtitle"><span id="dlg-title">Parts List</span><button type="button" aria-label="Close dialog"><svg width="12" height="12" viewBox="0 0 12 12"><path d="M2 2l8 8M10 2l-8 8" stroke="#5a2020" stroke-width="4"/><path d="M2 2l8 8M10 2l-8 8" stroke="#fff" stroke-width="2.500"/></svg></button></div>
  <div class="dbody">
    <fieldset class="f1"><legend>Source</legend>
      <div class="row selview"><button type="button" class="sv" id="sv" aria-labelledby="sv-l"><svg width="22" height="22" viewBox="0 0 22 22"><path d="M2 3h14v13H2z" fill="none" stroke="#223" stroke-dasharray="1 1.500" stroke-width="1.500"/><path d="M5 7h8v6H5z" fill="#3ab8b0" stroke="#124"/><path d="M12 9l8 8-4 .5 2 4-2 1-2-4-3 2z" fill="#f06060" stroke="#401010"/></svg></button><label for="sv" id="sv-l">Select View</label></div>
      <div class="row src"><div class="sel grow"><select aria-label="Source file"><option>\\vm-file01\staff2$\jBraithwaite\2014-2015\Semester</option></select><i class="tri"></i></div>
      <button type="button" class="browse" aria-label="Browse"><svg width="16" height="14" viewBox="0 0 16 14"><path d="M1 2h5l1 2h8v9H1z" fill="#f2e860" stroke="#333"/><circle cx="8" cy="7" r="3.500" fill="#eef8ff" stroke="#222"/><path d="M11 9l4 4" stroke="#2238a8" stroke-width="2"/></svg></button></div>
    </fieldset>
    <fieldset class="f2"><legend>BOM Settings and Properties</legend>
      <div class="bom">
        <label for="bv">BOM View</label><label for="lv">Level</label><label for="md">Min.Digits</label>
        <div class="sel"><select id="bv"><option>Structured</option></select><i class="tri"></i></div>
        <div class="sel"><select id="lv"><option>First Level</option></select><i class="tri"></i></div>
        <div class="sel short"><select id="md"><option>1</option></select><i class="tri"></i></div>
      </div>
    </fieldset>
    <fieldset class="f3"><legend>Table Wrapping</legend>
      <div class="line">Direction to Wrap Table:</div>
      <div class="row dir"><label><input type="radio" name="dir" checked>Left</label><label><input type="radio" name="dir">Right</label></div>
      <label class="auto"><input type="checkbox">Enable Automatic Wrap</label>
      <div class="row opt"><label><input type="radio" name="wrap" disabled>Maximum Rows</label><input type="text" value="10" disabled aria-label="Maximum rows value"></div>
      <div class="row opt"><label><input type="radio" name="wrap" checked disabled>Number of Sections</label><input type="text" value="1" disabled aria-label="Number of sections value"></div>
    </fieldset>
    <div class="row foot"><button type="button" class="btn help" aria-label="Dialog help"><svg width="13" height="14"><use href="#i-help"/></svg></button><span class="hl"><button type="submit" class="btn ok">OK</button></span><button type="button" class="btn">Cancel</button></div>
  </div>
</form>
</div>
</body>
</html>
```

FILE: styles.css
```css
* { box-sizing: border-box; }
body { margin: 0; background: #d8d6d8; font-family: "Open Sans", "Noto Sans", sans-serif; font-size: 11px; line-height: 14px; color: #3c3a3c; }
button, input, select { font: inherit; color: inherit; margin: 0; }
button { border: 0; padding: 0; background: none; display: flex; align-items: center; white-space: nowrap; }
h2 { margin: 0; font-size: 11px; font-weight: 400; }
i { font-style: normal; flex: none; }
svg { display: block; flex: none; }
.defs { position: absolute; }
.app { position: relative; display: flex; flex-direction: column; height: 100vh; overflow: hidden; border-left: 1px solid #111; }

.tri { width: 0; height: 0; border: 3px solid transparent; border-top-color: currentColor; border-bottom: 0; }
.tri.up { border-top: 0; border-bottom: 4px solid currentColor; }
.tri.dim { color: #444; }
.tri.dark { color: #111; border-width: 4px; border-bottom: 0; }
.tri.push { margin-left: auto; }
.tri.push2 { margin-left: 3px; }

/* title bar and tabs */
.top { display: grid; grid-template-columns: 38px 1fr; grid-template-rows: 22px 17px; background: #413e41; }
.app-btn { grid-row: 1 / 3; position: relative; flex-direction: column; padding: 3px 6px 0 0; background: linear-gradient(#a9a7a9, #6f6d6f); border: 1px solid #333; color: #222; }
.app-btn b { font-size: 7px; line-height: 8px; }
.app-tri { position: absolute; right: 2px; top: 16px; }
.titlebar { display: flex; align-items: stretch; min-width: 0; background: linear-gradient(90deg, #6d6d70, #8e8d90 38%, #77777c 50%, #3a3d4b 63%, #2a2d3e 70%, #5a6370); border-bottom: 1px solid #777; }
.qat { display: flex; align-items: center; gap: 7px; width: 299px; flex: none; padding-left: 9px; background: linear-gradient(#8b898b, #5c5a5c); }
.qat .tri { margin-left: -4px; margin-right: -1px; }
.wtitle { flex: 1; min-width: 0; display: flex; justify-content: center; align-items: center; gap: 9px; color: #151515; white-space: nowrap; text-shadow: 0 0 5px #d0d0d0, 0 0 8px #bbb; }
.search { display: flex; align-items: center; gap: 6px; flex: none; width: 448px; padding-left: 5px; background: linear-gradient(#8b898b, #5c5a5c); color: #f0f0f0; }
.search input { width: 168px; height: 19px; border: 1px solid #999; background: #f7f5f8; padding: 0 2px; margin: 0 -3px 0 -2px; font-size: 10px; }
.search input::placeholder { color: #666; font-style: italic; opacity: 1; }
.play { border: 4px solid transparent; border-left: 5px solid #111; border-right: 0; }
.signin { gap: 5px; margin-right: auto; }
.search .vline { width: 1px; height: 14px; background: #999; margin: 0 2px; }
.search .tri { margin-right: 3px; }
.winbtns { display: flex; flex: none; width: 114px; padding: 0 2px 5px 16px; background: #8a9299; }
.winbtns button { width: 27px; justify-content: center; background: linear-gradient(#a9b2b9, #59656f); border: 1px solid #333; border-top: 0; border-radius: 0 0 0 4px; }
.winbtns button + button { border-radius: 0; border-left: 0; }
.winbtns .x { flex: 1; background: linear-gradient(#d98a80, #b0301c); border-radius: 0 0 4px 0; }
.tabs { display: flex; padding-left: 3px; gap: 1px; color: #f0f0f0; }
.tabs button { padding: 0 8px; height: 17px; }
.tabs .on { background: #edec3a; color: #5a5a10; height: 20px; padding-bottom: 3px; z-index: 1; }
.mini { display: flex; align-items: center; gap: 5px; margin-left: 21px; }

/* ribbon */
.ribbon { display: flex; flex: none; height: 89px; background: linear-gradient(#d5d3d6, #8d8b8e); border-top: 1px solid #eee; border-bottom: 2px solid #777; }
.panel { display: flex; flex-direction: column; flex: none; background: #fff; border-right: 1px solid #b4b2b6; }
.pbody { display: flex; flex: 1; padding: 2px 2px 0 1px; min-height: 0; }
.panel h2 { height: 17px; line-height: 15px; text-align: center; background: #efedf0; border-top: 1px solid #d8d6da; }
.p-dim { width: 214px; } .p-feat { width: 127px; } .p-text { width: 78px; } .p-sym { width: 281px; } .p-sk { width: 43px; } .p-table { width: 189px; flex-direction: row; } .p-fmt { width: 191px; }
.big { flex-direction: column; justify-content: flex-start; gap: 5px; line-height: 13px; padding-top: 2px; flex: none; text-align: center; position: relative; height: 66px; }
.w60 { width: 60px; } .w54 { width: 52px; } .w36 { width: 37px; } .w42 { width: 40px; } .w66 { width: 62px; } .w40 { width: 38px; }
.stack { display: flex; flex-direction: column; height: 66px; }
.stack button { height: 22px; gap: 5px; }
.w84 { width: 82px; padding: 0 4px 0 3px; margin-right: 2px; }
.p-feat .stack { padding-left: 2px; }
.below { margin-top: -3px; }
.gallery { display: flex; border: 1px solid #ccc; height: 66px; width: 216px; }
.gallery button { flex: 1; flex-direction: column; justify-content: flex-end; gap: 4px; padding-bottom: 1px; }
.gscroll { width: 13px; display: grid; grid-template-rows: 1fr 1fr 1fr; place-items: center; background: #eeecef; border-left: 1px solid #ccc; }
.bar { border-top-width: 4px; outline: 1px solid #bbb; outline-offset: 2px; }
.mini-grid { display: grid; grid-template-columns: 22px 22px; grid-template-rows: 20px 20px; gap: 3px 5px; padding-left: 5px; margin-left: 6px; border-left: 1px solid #ccc; }
.mini-grid button { border: 1px solid #ccc; background: #f6f4f7; justify-content: center; }
.parts { width: 41px; margin-top: -1px; padding: 4px 4px 0 1px; background: #f2ef3c; }
.parts-btn { width: 36px; background: #b0d02e; border: 1px solid #4d6a14; color: #4d5a10; padding-top: 1px; }
.prest { flex: 1; display: flex; flex-direction: column; }
.w84b { width: 80px; } .w84b button { gap: 4px; }
.shift { padding-right: 44px; }
.pdiv { width: 1px; background: #d4d2d6; margin: 0 2px; height: 66px; }
.fmts { flex: 1; display: flex; flex-direction: column; gap: 1px; }
.fmt { display: flex; align-items: center; height: 21px; border: 1px solid #d4d2d6; background: #f5f3f6; padding: 0 2px 0 4px; }
.fmt select { appearance: none; flex: 1; min-width: 0; border: 0; background: none; padding: 0 2px; overflow: hidden; }
.fmt:first-child select { padding-left: 34px; }
.fmt .tri { border-width: 4px 4px 0; }

/* browser panel */
.work { display: flex; flex: 1; min-height: 0; }
.side { width: 193px; flex: none; display: flex; flex-direction: column; padding: 3px 3px 6px; background: #f2f0f3; }
.grip { height: 12px; display: flex; align-items: center; gap: 4px; color: #111; }
.grip i { flex: 1; height: 4px; border: 1px solid #999; border-width: 1px 0; }
.grip span { font-size: 12px; line-height: 12px; font-weight: 700; padding-right: 2px; }
.model { flex: 1; border: 1px solid #777; border-top: 0; background: #fff; font-family: "DejaVu Sans Condensed", "DejaVu Sans", sans-serif; font-size: 10px; }
.mhead { display: flex; align-items: center; gap: 4px; height: 19px; padding: 0 2px 0 7px; background: #a9a7a9; color: #fff; font-size: 11px; }
.mhead svg { margin-left: auto; } .mhead .tri { border-width: 4px 4px 0; }
.tree { list-style: none; margin: 0; padding: 0; height: 252px; display: grid; grid-template-rows: repeat(15, 1fr); color: #222; }
.tree li { display: flex; align-items: center; gap: 3px; position: relative; white-space: nowrap; }
.l0 { padding-left: 5px; } .l1 { padding-left: 3px; } .l2 { padding-left: 21px; }
.l1::before, .l2::before { content: ""; position: absolute; left: 7px; top: 0; bottom: 0; border-left: 1px solid #999; }
.l2::after { content: ""; position: absolute; left: 25px; top: 0; bottom: 0; border-left: 1px solid #999; }
.sel.l1 { background: #bfbdbf; }
.ex { width: 16px; height: 9px; position: relative; z-index: 1; background: linear-gradient(#444, #444) 2px 4px / 5px 1px no-repeat, linear-gradient(#444, #444) 4px 2px / 1px 5px no-repeat, linear-gradient(#999, #999) 9px 4px / 6px 1px no-repeat; }
.ex::before { content: ""; position: absolute; left: 0; top: 0; width: 9px; height: 9px; border: 1px solid #888; }
.ex.minus { background: linear-gradient(#444, #444) 2px 4px / 5px 1px no-repeat, linear-gradient(#999, #999) 9px 4px / 6px 1px no-repeat; }
.ex.none { background: linear-gradient(#999, #999) 4px 4px / 11px 1px no-repeat; }
.ex.none::before { display: none; }

/* drawing area */
.doc { flex: 1; min-width: 0; display: flex; flex-direction: column; border-right: 2px solid #e4e4e8; }
.canvas { flex: 1; min-height: 0; position: relative; padding: 13px 0; background: #5b697b; }
.sheet { width: 100%; height: 100%; font-family: "DejaVu Sans Condensed", "DejaVu Sans", sans-serif; fill: #111; overflow: visible; }
.zone { font-size: 16px; } .lbl { font-size: 11px; } .val { font-size: 14px; } .ttl { font-size: 17px; }
.arrow { filter: drop-shadow(3px 6px 4px rgba(60, 60, 20, .5)); }
.docbtns { position: absolute; right: 2px; top: 6px; display: flex; gap: 8px; }
.navbar { position: absolute; right: 1px; top: 24px; width: 31px; height: 157px; display: flex; flex-direction: column; align-items: center; gap: 6px; padding: 2px 0 3px; background: #8893a1; border: 1px solid #4c5868; border-radius: 4px; }
.navbar .end { align-self: flex-end; margin-right: 3px; }
.navbar .last { margin-top: auto; }
.wheel { width: 24px; height: 30px; border-bottom: 1px solid #65738a; }
.doctabs { display: flex; flex: none; height: 22px; padding-top: 1px; background: linear-gradient(#b9b7b9, #dedcde); border-top: 1px solid #eee; }
.sq { width: 18px; height: 20px; border: 1px solid #555; justify-content: center; background: #d8d6d8; }
.dt { height: 18px; padding: 0 6px; gap: 4px; border: 1px solid #666; border-top: 0; border-radius: 0 0 4px 4px; background: #c6c4c6; color: #222; }
.dt.on { margin-left: 2px; background: #fff; } .dt svg { margin-top: -4px; }
.status { display: flex; flex: none; align-items: center; height: 22px; padding: 2px 17px 0 1px; gap: 22px; background: linear-gradient(#f4f2f4, #a8a6a8); color: #222; }
.status .n { margin-left: auto; }

/* Parts List window */
.dialog { position: absolute; left: 188px; top: 122px; width: 332px; padding: 0 6px 5px; border: 1px solid #333; border-radius: 7px; background: linear-gradient(90deg, #a8a8aa, #606874 45%, #4d5a6a 70%, #999 90%); box-shadow: 0 2px 9px 2px rgba(0, 0, 0, .75), inset 0 0 0 1px #ccc; font-family: "DejaVu Sans Condensed", "DejaVu Sans", sans-serif; font-size: 10px; color: #222; }
.dtitle { display: flex; height: 26px; align-items: center; justify-content: space-between; font-family: "Open Sans", sans-serif; font-size: 11px; text-shadow: 0 0 6px #fff; }
.dtitle button { align-self: flex-start; width: 44px; height: 17px; justify-content: center; border: 1px solid #501510; border-top: 0; border-radius: 0 0 4px 4px; background: linear-gradient(#d98a80, #b0301c); }
.dbody { padding: 10px 6px 9px 8px; background: #f0eef1; border: 1px solid #555; }
fieldset { margin: 0; padding: 0 0 0 4px; border: 1px solid #dcdadf; border-radius: 3px; min-width: 0; }
legend { padding: 0 3px; margin-left: -2px; line-height: 14px; }
.f1 { height: 84px; } .f2 { height: 68px; margin-top: 8px; } .f3 { height: 141px; margin-top: 7px; }
.row { display: flex; align-items: center; }
.selview { gap: 7px; margin-top: 5px; }
.sv { width: 29px; height: 29px; justify-content: center; border: 1px solid #2c628b; border-radius: 2px; background: linear-gradient(#d2e9f6, #7fbfe0); }
.src { gap: 9px; margin-top: 7px; }
.sel:not(.l1) { position: relative; display: flex; align-items: center; width: 103px; height: 19px; border: 1px solid #777; border-radius: 2px; background: linear-gradient(#f4f2f4, #d6d4d7); padding-right: 5px; color: #111; }
.sel select { appearance: none; flex: 1; min-width: 0; border: 0; background: none; padding: 0 3px; color: #222; }
.sel .tri { border-width: 4px 4px 0; }
.sel.grow { width: 260px; }
.sel.short { width: 60px; }
.browse { width: 22px; height: 21px; border: 1px solid #777; border-radius: 2px; justify-content: center; background: #e6e4e7; }
.bom { display: grid; grid-template-columns: 103px 106px 60px; column-gap: 9px; row-gap: 5px; margin-top: 5px; }
.bom label:nth-child(2) { padding-left: 4px; }
.line { margin-top: 5px; }
.f3 label { display: flex; align-items: center; gap: 4px; }
.f3 input[type="radio"], .f3 input[type="checkbox"] { appearance: none; width: 11px; height: 11px; border: 1px solid #888; border-radius: 50%; background: #f4f4f6; }
.f3 input[type="checkbox"] { width: 12px; height: 12px; border-radius: 0; }
.f3 input[type="radio"]:checked { background: radial-gradient(circle, #8fc4e8 1px, #1c4a74 3px, #f4f4f6 4px); }
.f3 input[type="radio"]:disabled { border-color: #bbb; }
.f3 input[type="radio"]:checked:disabled { border-color: #999; background: radial-gradient(circle, #888 3px, #f4f4f6 4px); }
.dir { margin-top: 4px; } .dir label { width: 148px; }
.f3 .auto { margin-top: 10px; height: 14px; gap: 3px; }
.opt { height: 18px; margin: 3px 0 0 14px; color: #888; justify-content: space-between; padding-right: 73px; }
.opt input[type="text"] { width: 56px; height: 18px; border: 1px solid #b4b2b6; background: #f4f2f5; padding: 0 5px; }
.opt + .opt { margin-top: 4px; }
.foot { margin-top: 6px; }
.btn { width: 68px; height: 20px; justify-content: center; border: 1px solid #777; border-radius: 2px; background: linear-gradient(#f4f2f4, #d6d4d7); }
.help { width: 20px; }
.hl { margin-left: auto; margin-right: 6px; padding: 2px 4px; background: #f3f13c; }
.ok { background: #ece93a; border-color: #a3a01c; color: #8a8820; }
```
